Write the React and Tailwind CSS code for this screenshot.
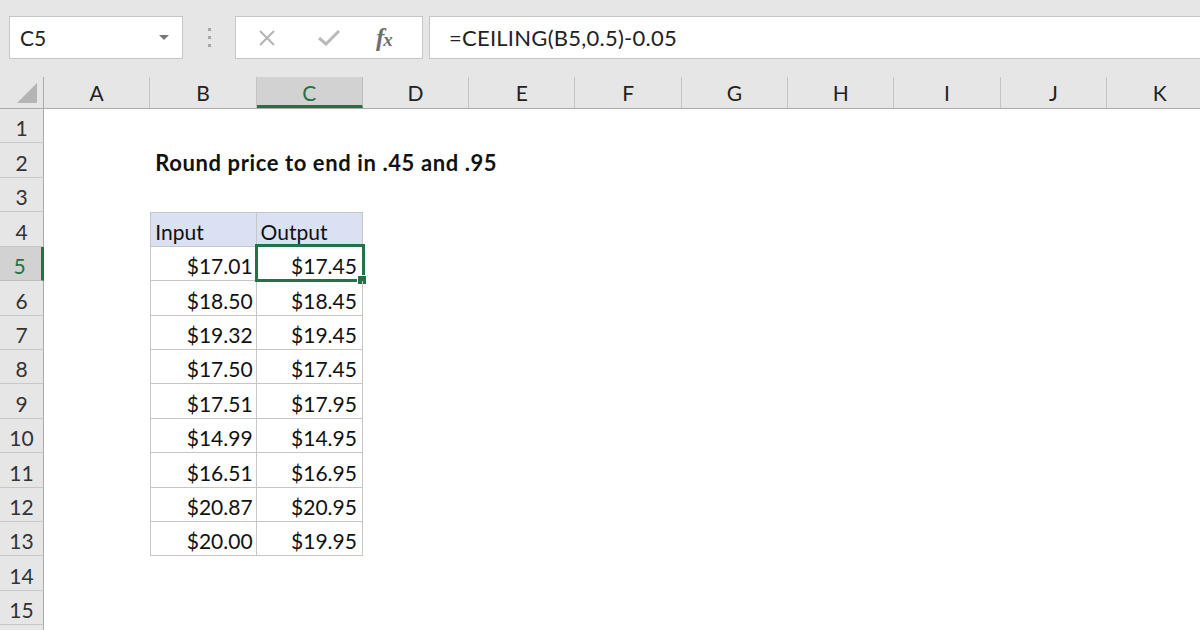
import React from 'react';

const cols = ['A', 'B', 'C', 'D', 'E', 'F', 'G', 'H', 'I', 'J', 'K'];

const data = [
  ['$17.01', '$17.45'],
  ['$18.50', '$18.45'],
  ['$19.32', '$19.45'],
  ['$17.50', '$17.45'],
  ['$17.51', '$17.95'],
  ['$14.99', '$14.95'],
  ['$16.51', '$16.95'],
  ['$20.87', '$20.95'],
  ['$20.00', '$19.95'],
];

function TopBar() {
  return (
    <div className="h-[77px] bg-[#e6e6e6] flex items-start pt-[16px] pl-[9px]">
      <div className="w-[174px] shrink-0 h-[43px] bg-white border border-[#c6c6c6] flex items-center justify-between pl-[10px] pr-[13px]">
        <span className="text-[21px] text-[#222]">C5</span>
        <div className="w-0 h-0 border-l-[5px] border-r-[5px] border-t-[5px] border-l-transparent border-r-transparent border-t-[#777]" />
      </div>
      <div className="w-[52px] shrink-0 h-[43px] flex flex-col items-center justify-center gap-[5px]">
        <div className="w-[3px] h-[3px] bg-[#a8a8a8]" />
        <div className="w-[3px] h-[3px] bg-[#a8a8a8]" />
        <div className="w-[3px] h-[3px] bg-[#a8a8a8]" />
      </div>
      <div className="w-[188px] shrink-0 h-[43px] bg-white border border-[#c6c6c6] flex items-center pl-[22px]">
        <svg width="18" height="18" viewBox="0 0 18 18" className="mr-[42px]">
          <path d="M2 2 L16 16 M16 2 L2 16" stroke="#b4b4b4" strokeWidth="2" />
        </svg>
        <svg width="22" height="16" viewBox="0 0 22 16" className="mr-[36px]">
          <path d="M1 8 L8 14 L21 1" stroke="#b9b9b9" strokeWidth="3" fill="none" />
        </svg>
        <span className="font-['Liberation_Serif'] italic font-bold text-[25px] leading-none text-[#6e6e6e] tracking-[-1px]">
          f<span className="text-[19px]">x</span>
        </span>
      </div>
      <div className="ml-[6px] flex-1 h-[43px] bg-white border border-[#c6c6c6] border-r-0 flex items-center pl-[19px]">
        <span className="text-[22px] tracking-[0.25px] text-[#222]">=CEILING(B5,0.5)-0.05</span>
      </div>
    </div>
  );
}

function ColumnHeader() {
  return (
    <div className="h-[32px] flex bg-[#e6e6e6] border-b border-[#ababab]">
      <div className="w-[44px] shrink-0 border-r border-[#ababab] relative">
        <svg width="20" height="20" viewBox="0 0 20 20" className="absolute right-[6px] bottom-[5px]">
          <path d="M20 0 L20 20 L0 20 Z" fill="#b4b4b4" />
        </svg>
      </div>
      {cols.map((c) => {
        const sel = c === 'C';
        return (
          <div
            key={c}
            className={
              sel
                ? 'w-[106.3px] shrink-0 flex items-center justify-center text-[21px] text-[#217346] bg-[#d2d2d2] border-r border-[#bcbcbc] border-b-[3px] border-b-[#217346] pt-[3px]'
                : 'w-[106.3px] shrink-0 flex items-center justify-center text-[21px] text-[#222] border-r border-[#c4c4c4]'
            }
          >
            {c}
          </div>
        );
      })}
    </div>
  );
}

function RowHeader({ n }) {
  const sel = n === 5;
  return (
    <div
      className={
        sel
          ? 'w-[44px] shrink-0 h-full flex items-end justify-center pb-[4px] pr-[2px] bg-[#d2d2d2] border-r-[3px] border-[#217346] border-b border-b-[#bdbdbd] text-[21px] leading-none text-[#217346]'
          : 'w-[44px] shrink-0 h-full flex items-end justify-center pb-[4px] bg-[#e6e6e6] border-r border-[#ababab] border-b border-b-[#c8c8c8] text-[21px] leading-none text-[#333]'
      }
    >
      {n <= 15 ? n : ''}
    </div>
  );
}

export default function App() {
  const rows = Array.from({ length: 16 }, (_, i) => i + 1);
  return (
    <div className="w-[1200px] h-[630px] overflow-hidden bg-white font-['Lato',sans-serif]">
      <TopBar />
      <ColumnHeader />
      {rows.map((n) => (
        <div key={n} className="h-[34.43px] flex text-[21px] leading-none text-[#111]">
          <RowHeader n={n} />
          <div className="w-[106.3px] shrink-0" />
          {n === 2 && (
            <div className="flex items-end pb-[4px] pl-[5px] font-bold text-[22px] tracking-[0.6px] whitespace-nowrap">
              Round price to end in .45 and .95
            </div>
          )}
          {n === 4 && (
            <>
              <div className="w-[106.3px] shrink-0 bg-[#d9e1f2] border border-[#c6c6c6] flex items-end pb-[4px] pl-[4px]">Input</div>
              <div className="w-[106.3px] shrink-0 bg-[#d9e1f2] border border-l-0 border-[#c6c6c6] flex items-end pb-[4px] pl-[4px]">Output</div>
            </>
          )}
          {n >= 5 && n <= 13 && (
            <>
              <div className="w-[106.3px] shrink-0 border-l border-r border-b border-[#c6c6c6] flex items-end justify-end pb-[4px] pr-[3px]">
                {data[n - 5][0]}
              </div>
              <div className="relative w-[106.3px] shrink-0 border-r border-b border-[#c6c6c6] flex items-end justify-end pb-[4px] pr-[5px]">
                {data[n - 5][1]}
                {n === 5 && (
                  <>
                    <div className="absolute -left-[2px] -top-[3px] -right-[3px] -bottom-[2px] border-[3px] border-[#217346]" />
                    <div className="absolute -right-[5px] -bottom-[5px] w-[10px] h-[10px] bg-[#217346] border border-white" />
                  </>
                )}
              </div>
            </>
          )}
        </div>
      ))}
    </div>
  );
}
